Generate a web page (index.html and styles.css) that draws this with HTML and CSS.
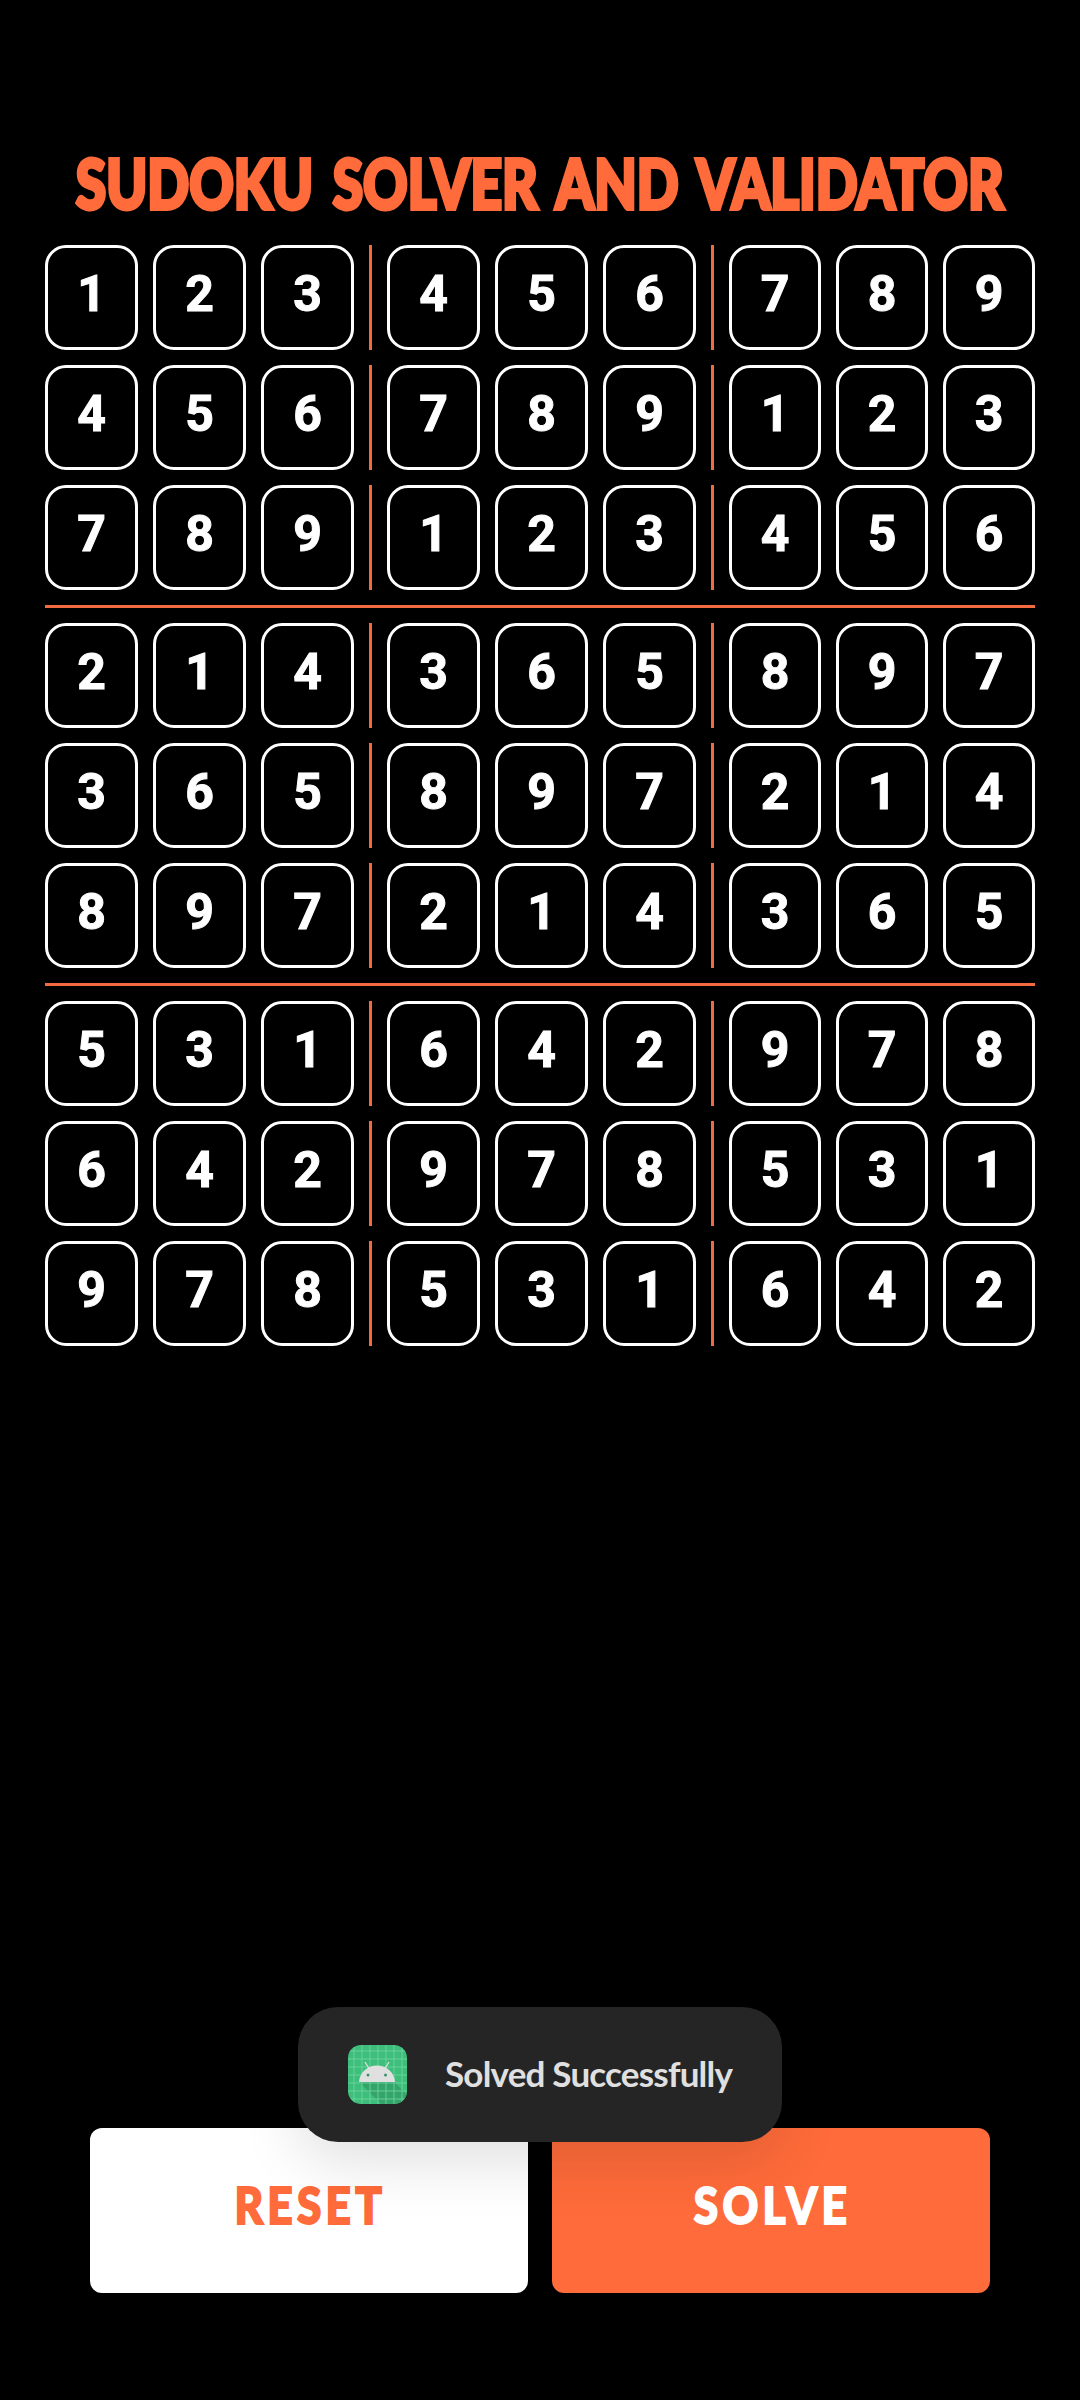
FILE: index.html
```html
<!DOCTYPE html>
<html lang="en">
<head>
    <meta charset="UTF-8">
    <meta name="viewport" content="width=device-width, initial-scale=1.0">
    <title>Sudoku Solver and Validator</title>
    <link rel="stylesheet" href="styles.css">
</head>
<body>
    <h1 class="title"><span>SUDOKU SOLVER AND VALIDATOR</span></h1>

    <div class="board">
        <div class="row"><div class="cell">1</div><div class="cell">2</div><div class="cell">3</div><div class="vline"></div><div class="cell">4</div><div class="cell">5</div><div class="cell">6</div><div class="vline"></div><div class="cell">7</div><div class="cell">8</div><div class="cell">9</div></div>
        <div class="row"><div class="cell">4</div><div class="cell">5</div><div class="cell">6</div><div class="vline"></div><div class="cell">7</div><div class="cell">8</div><div class="cell">9</div><div class="vline"></div><div class="cell">1</div><div class="cell">2</div><div class="cell">3</div></div>
        <div class="row"><div class="cell">7</div><div class="cell">8</div><div class="cell">9</div><div class="vline"></div><div class="cell">1</div><div class="cell">2</div><div class="cell">3</div><div class="vline"></div><div class="cell">4</div><div class="cell">5</div><div class="cell">6</div></div>
        <div class="hline"></div>
        <div class="row"><div class="cell">2</div><div class="cell">1</div><div class="cell">4</div><div class="vline"></div><div class="cell">3</div><div class="cell">6</div><div class="cell">5</div><div class="vline"></div><div class="cell">8</div><div class="cell">9</div><div class="cell">7</div></div>
        <div class="row"><div class="cell">3</div><div class="cell">6</div><div class="cell">5</div><div class="vline"></div><div class="cell">8</div><div class="cell">9</div><div class="cell">7</div><div class="vline"></div><div class="cell">2</div><div class="cell">1</div><div class="cell">4</div></div>
        <div class="row"><div class="cell">8</div><div class="cell">9</div><div class="cell">7</div><div class="vline"></div><div class="cell">2</div><div class="cell">1</div><div class="cell">4</div><div class="vline"></div><div class="cell">3</div><div class="cell">6</div><div class="cell">5</div></div>
        <div class="hline"></div>
        <div class="row"><div class="cell">5</div><div class="cell">3</div><div class="cell">1</div><div class="vline"></div><div class="cell">6</div><div class="cell">4</div><div class="cell">2</div><div class="vline"></div><div class="cell">9</div><div class="cell">7</div><div class="cell">8</div></div>
        <div class="row"><div class="cell">6</div><div class="cell">4</div><div class="cell">2</div><div class="vline"></div><div class="cell">9</div><div class="cell">7</div><div class="cell">8</div><div class="vline"></div><div class="cell">5</div><div class="cell">3</div><div class="cell">1</div></div>
        <div class="row"><div class="cell">9</div><div class="cell">7</div><div class="cell">8</div><div class="vline"></div><div class="cell">5</div><div class="cell">3</div><div class="cell">1</div><div class="vline"></div><div class="cell">6</div><div class="cell">4</div><div class="cell">2</div></div>
    </div>

    <div class="actions">
        <button class="action reset"><span>RESET</span></button>
        <button class="action solve"><span>SOLVE</span></button>
    </div>

    <!-- toast sits over the buttons -->
    <div class="toast">
        <svg class="toast-icon" viewBox="0 0 59 59" width="59" height="59">
            <clipPath id="icon-clip"><rect width="59" height="59" rx="13"/></clipPath>
            <g clip-path="url(#icon-clip)">
                <rect width="59" height="59" fill="#3dbe7b"/>
                <path d="M11 37 L33 59 L59 59 L59 50 L46.500 37 Z" fill="#34a56a"/>
                <path d="M6 0V59M14 0V59M22 0V59M30 0V59M38 0V59M46 0V59M54 0V59M0 6H59M0 14H59M0 22H59M0 30H59M0 38H59M0 46H59M0 54H59" stroke="#74d6a3" stroke-width=".8" fill="none"/>
            </g>
            <path d="M17 17 L21 23.500M41 17 L37 23.500" stroke="#e0e0e0" stroke-width="1.300"/>
            <path d="M11 37 C11.500 27.500 19.500 20.500 29 20.500 C38.500 20.500 46.500 27.500 47 37 Z" fill="#e0e0e0"/>
            <circle cx="20" cy="30" r="1.500" fill="#3a9467"/>
            <circle cx="37.500" cy="30" r="1.500" fill="#3a9467"/>
        </svg>
        <span class="toast-text">Solved Successfully</span>
    </div>
</body>
</html>
```

FILE: styles.css
```css
* {
    box-sizing: border-box;
}
body {
    margin: 0;
    width: 1080px;
    height: 2400px;
    position: relative;
    overflow: hidden;
    display: flex;
    flex-direction: column;
    padding: 148px 45px 107px;
    background: #000;
    font-family: Lato, "Open Sans", sans-serif;
}
.title {
    margin: 0 0 27px;
    height: 70px;
    display: flex;
    justify-content: center;
    line-height: 70px;
    font-size: 68px;
    font-weight: 900;
    color: #ff6b3a;
    white-space: nowrap;
}
.title span {
    transform: scaleX(0.81);
    word-spacing: 8px;
    -webkit-text-stroke: 4px #ff6b3a;
}
.board {
    display: flex;
    flex-direction: column;
    gap: 15px;
}
/* last block comes out a pixel narrower per cell */
.row {
    display: grid;
    grid-template-columns: repeat(3, 93px) 3px repeat(3, 93px) 3px repeat(3, 1fr);
    gap: 15px;
    height: 105px;
}
.cell {
    display: flex;
    justify-content: center;
    align-items: center;
    padding-bottom: 7px;
    border: 3px solid #fff;
    border-radius: 21px;
    color: #fff;
    font-family: Roboto, sans-serif;
    font-size: 50px;
    font-weight: 700;
    -webkit-text-stroke: 1px #fff;
}
.vline {
    background: #f26a40;
}
.hline {
    height: 3px;
    background: #f26a40;
}
.actions {
    margin-top: auto;
    padding: 0 45px;
    display: flex;
    gap: 24px;
}
.action {
    flex: 1;
    height: 165px;
    padding: 0 0 13px;
    border: none;
    border-radius: 12px;
    font-family: inherit;
    font-size: 52px;
    font-weight: 900;
    letter-spacing: 5px;
}
.action span {
    display: inline-block;
    transform: scaleX(0.85);
}
.reset {
    padding-left: 3px;
    background: #fff;
    color: #ff6b3a;
    -webkit-text-stroke: 2px #ff6b3a;
}
.solve {
    padding-left: 3px;
    background: #ff6b3a;
    color: #fff;
    -webkit-text-stroke: 2px #fff;
}
.toast {
    position: absolute;
    left: 298px;
    top: 2007px;
    width: 484px;
    height: 135px;
    display: flex;
    align-items: center;
    gap: 38px;
    padding-left: 50px;
    border-radius: 40px;
    background: #252525;
    box-shadow: 0 20px 60px rgba(0, 0, 0, 0.12);
}
.toast-icon {
    flex: none;
}
.toast-text {
    padding-bottom: 3px;
    color: #e0e0e0;
    font-size: 35px;
    font-weight: 700;
    letter-spacing: -0.8px;
    white-space: nowrap;
}
```
